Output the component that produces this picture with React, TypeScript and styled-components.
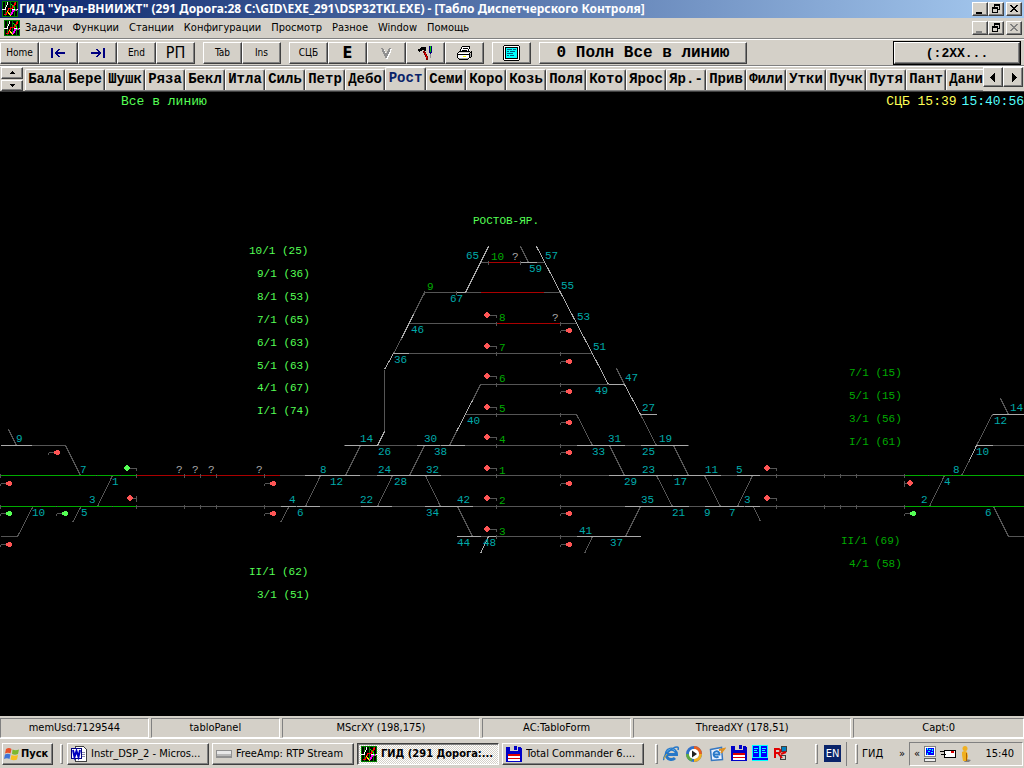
import React from "react";
import styled, { createGlobalStyle, css } from "styled-components";

const FACE = "#d4d0c8";
const UI = `"DejaVu Sans Condensed", "DejaVu Sans", sans-serif`;
const MONO = `"Liberation Mono", monospace`;

const GlobalStyle = createGlobalStyle`
  * { box-sizing: border-box; }
  body { margin: 0; background: ${FACE}; overflow-x: hidden; }
  button { font: inherit; color: inherit; margin: 0; padding: 0; white-space: nowrap; }
`;

const raised = css`
  background: ${FACE};
  border: 1px solid;
  border-color: #fff #404040 #404040 #fff;
  box-shadow: inset -1px -1px #808080;
`;

const Screen = styled.div`
  display: flex;
  flex-direction: column;
  min-height: 100vh;
  background: ${FACE};
  font-family: ${UI};
  font-size: 11px;
  color: #000;
`;

const TitleBar = styled.header`
  display: flex;
  align-items: center;
  gap: 1px;
  height: 18px;
  padding: 0 2px;
  background: linear-gradient(90deg, #0a246a, #a6caf0);
  color: #fff;
`;

const TitleText = styled.h1`
  flex: 1;
  margin: 0;
  font-family: "Noto Sans", sans-serif;
  font-size: 12px;
  font-weight: 700;
  line-height: 18px;
  white-space: nowrap;
  overflow: hidden;
`;

const MenuBar = styled.div`
  display: flex;
  align-items: center;
  height: 20px;
  padding: 0 2px 0 4px;
`;

const Menus = styled.nav`
  display: flex;
  flex: 1;
  gap: 10px;
  padding-left: 5px;
`;

const MenuItem = styled.button`
  border: 0;
  background: none;
  line-height: 16px;
`;

const WindowButtons = styled.div`
  display: flex;
`;

const WindowButton = styled.button<{ $apart?: boolean }>`
  ${raised}
  display: grid;
  place-items: center;
  width: 16px;
  height: 14px;
  color: #000;
  margin-left: ${(p) => (p.$apart ? 2 : 0)}px;
  &:disabled { color: #808080; }
`;

const Toolbar = styled.div`
  display: flex;
  align-items: center;
  height: 28px;
  border-top: 1px solid #808080;
  border-bottom: 1px solid #808080;
  box-shadow: inset 0 1px #fff;
  padding: 2px 4px 0 0;
`;

const ToolGroup = styled.div`
  display: flex;
  margin-right: 8px;
`;

const ToolButton = styled.button<{ $wide?: boolean }>`
  ${raised}
  display: grid;
  place-items: center;
  width: ${(p) => (p.$wide ? 208 : 39)}px;
  height: 22px;
  font-family: ${(p) => (p.$wide ? MONO : UI)};
  font-size: ${(p) => (p.$wide ? 16 : 10)}px;
  font-weight: ${(p) => (p.$wide ? 700 : 400)};
  line-height: 18px;
`;

const BigLabel = styled.span<{ $bold?: boolean }>`
  font-size: 16px;
  font-weight: ${(p) => (p.$bold ? 700 : 400)};
  line-height: 18px;
`;

const DefaultButton = styled.button`
  ${raised}
  outline: 1px solid #000;
  width: 126px;
  height: 22px;
  margin-left: auto;
  font-family: ${MONO};
  font-size: 13px;
  font-weight: 700;
`;

const TabStrip = styled.div`
  display: flex;
  height: 26px;
  border-top: 1px solid #fff;
  border-bottom: 1px solid #404040;
`;

const Spinner = styled.div`
  display: flex;
  flex-direction: column;
  gap: 1px;
  width: 22px;
  margin: 0 2px 0 1px;
`;

const SpinButton = styled.button`
  ${raised}
  flex: 1;
  display: grid;
  place-items: center;
`;

const Tabs = styled.div`
  display: flex;
  flex: 1;
  min-width: 0;
  overflow: hidden;
  align-items: flex-end;
  border-bottom: 1px solid #808080;
`;

const Tab = styled.button<{ $on?: boolean }>`
  flex: 0 0 ${(p) => (p.$on ? 41 : 40)}px;
  height: ${(p) => (p.$on ? 23 : 21)}px;
  padding-bottom: ${(p) => (p.$on ? 3 : 2)}px;
  overflow: hidden;
  background: ${FACE};
  border: 0 solid;
  border-width: 1px 1px 0 1px;
  border-color: #fff #404040 #404040 #fff;
  border-radius: 2px 2px 0 0;
  box-shadow: inset -1px 0 #808080;
  font-family: ${MONO};
  font-size: 14px;
  font-weight: 700;
  line-height: 16px;
  color: ${(p) => (p.$on ? "#0a246a" : "#000")};
`;

const Scroller = styled.div`
  display: flex;
  padding-right: 1px;
`;

const ScrollButton = styled.button`
  ${raised}
  display: grid;
  place-items: center;
  width: 20px;
  height: 20px;
`;

const Board = styled.main`
  flex: 1;
  background: #000;
  font-family: ${MONO};
`;

const BoardHeader = styled.div`
  display: flex;
  gap: 5px;
  height: 18px;
  padding-left: 121px;
  font-size: 13px;
  line-height: 20px;
  color: #5f5;
  white-space: nowrap;
`;

const Mode = styled.span`
  flex: 1;
`;

const Stamp = styled.span<{ $live?: boolean }>`
  color: ${(p) => (p.$live ? "#5ff" : "#ff5")};
`;

const Scheme = styled.svg`
  display: block;
  width: 100%;
  height: auto;
`;

const SchemeText = styled.text`
  font-family: ${MONO};
  font-size: 11px;
  white-space: pre;
`;

const StatusBar = styled.footer`
  display: grid;
  grid-template-columns: 150fr 130fr 200fr 150fr 220fr 172fr;
  gap: 2px;
  height: 22px;
  padding-top: 2px;
`;

const StatusCell = styled.div`
  border: 1px solid;
  border-color: #808080 #fff #fff #808080;
  line-height: 18px;
  text-align: center;
  white-space: nowrap;
  overflow: hidden;
`;

const Taskbar = styled.div`
  display: flex;
  align-items: center;
  height: 30px;
  padding: 0 1px 0 2px;
  border-top: 1px solid #fff;
`;

const StartButton = styled.button`
  ${raised}
  display: flex;
  align-items: center;
  gap: 1px;
  width: 51px;
  height: 22px;
  padding-left: 1px;
  font-weight: 700;
`;

const Grip = styled.span<{ $gap?: number }>`
  width: 3px;
  height: 20px;
  margin: 0 4px 0 ${(p) => p.$gap ?? 8}px;
  background: ${FACE};
  border: 1px solid;
  border-color: #fff #808080 #808080 #fff;
`;

const Tasks = styled.div`
  display: flex;
  flex: 1;
  gap: 3px;
  min-width: 0;
`;

const Task = styled.button<{ $on?: boolean }>`
  ${raised}
  display: flex;
  align-items: center;
  gap: 4px;
  width: 142px;
  height: 22px;
  padding: 0 3px;
  ${(p) =>
    p.$on &&
    css`
      border-color: #404040 #fff #fff #404040;
      box-shadow: inset 1px 1px #808080;
      background: repeating-conic-gradient(#fff 0 25%, ${FACE} 0 50%) 0 0 / 2px 2px;
      font-weight: 700;
    `}
`;

const TaskName = styled.span`
  flex: 1;
  min-width: 0;
  overflow: hidden;
  text-align: left;
`;

const QuickLaunch = styled.div`
  display: flex;
  gap: 5px;
  padding-right: 26px;
`;

const IconButton = styled.button`
  display: block;
  border: 0;
  background: none;
  height: 18px;
`;

const Language = styled.button`
  width: 17px;
  height: 17px;
  margin-left: 2px;
  border: 0;
  background: #0a246a;
  color: #fff;
`;

const Divider = styled.span`
  width: 1px;
  height: 24px;
  margin-left: 5px;
  background: #808080;
`;

const DeskBand = styled.div`
  display: flex;
  width: 43px;
  justify-content: space-between;
`;

const Tray = styled.div`
  display: flex;
  align-items: center;
  gap: 3px;
  width: 114px;
  height: 24px;
  margin-left: 4px;
  padding: 0 8px 0 4px;
  border: 1px solid;
  border-color: #808080 #fff #fff #808080;
`;

const Clock = styled.time`
  margin-left: auto;
`;

const Pix = ({ w = 16, h = 16, children }: { w?: number; h?: number; children: React.ReactNode }) => (
  <svg width={w} height={h} viewBox={`0 0 ${w} ${h}`} shapeRendering="crispEdges" fill="none" aria-hidden="true">
    {children}
  </svg>
);

const GidIcon = () => (
  <Pix>
    <path fill="#000" d="M0 0h16v16H0z" />
    <path stroke="#008000" d="M3.5 0v16M8.5 0v16M12.5 0v16M0 .5h16M0 15.5h16M15.5 0v16M.5 0v16" />
    <path stroke="#fff" d="M0 8.5h3l3-7M10 8.5h6" />
    <path stroke="#f00" strokeWidth="1.5" d="M2 13.5h2l3-6h3l4-6" />
    <path stroke="#ff0" d="M5 10l4 5" />
    <path stroke="#f0f" strokeWidth="1.5" d="M9 14l2-4 4-1" />
    <path stroke="#0f0" d="M9 3l3 3 2 4" />
  </Pix>
);

const Floppy = () => (
  <Pix>
    <path fill="#0000c8" d="M0 1h14l2 2v13H0z" />
    <path fill="#d4d0c8" d="M4 0h8v5H4z" />
    <path fill="#0000c8" d="M8 0h3v4H8z" />
    <path fill="#fff" d="M2 8h12v7H2z" />
    <path fill="#e00000" d="M2 8h12v2H2zM2 12h12v1H2z" />
  </Pix>
);

const MinGlyph = () => <Pix w={10} h={10}><path fill="currentColor" d="M1 8h6v2H1z" /></Pix>;
const RestoreGlyph = () => (
  <Pix w={10} h={10}>
    <path fill="currentColor" d="M3 0h6v2H3zM3 2h1v1H3zM8 2h1v4H7V5h1zM1 3h6v2H1zM1 5h1v4H1zM6 5h1v4H6zM1 8h6v1H1z" />
  </Pix>
);
const CloseGlyph = () => (
  <Pix w={10} h={10}>
    <path fill="currentColor" d="M1 1h2v1h1v1h2V2h1V1h2v1H8v1H7v1H6v1h1v1h1v1h1v1H7V7H6V6H4v1H3v1H1V7h1V6h1V5h1V4H3V3H2V2H1z" />
  </Pix>
);

const ArrowLeft = () => (
  <Pix w={15} h={12}>
    <path fill="#000080" d="M0 1h2v10H0zM4 5h10v2H4zM5 4h2v1H5zM6 3h2v1H6zM7 2h2v1H7zM5 7h2v1H5zM6 8h2v1H6zM7 9h2v1H7z" />
  </Pix>
);
const ArrowRight = () => (
  <Pix w={15} h={12}>
    <path fill="#000080" d="M13 1h2v10h-2zM1 5h10v2H1zM8 4h2v1H8zM7 3h2v1H7zM6 2h2v1H6zM8 7h2v1H8zM7 8h2v1H7zM6 9h2v1H6z" />
  </Pix>
);
const Tools = () => (
  <Pix w={17} h={18}>
    <path fill="#000" d="M4 3h4v1h1v3H8v1H7V6H5v1H3v1H2V7H1V5h2V4h1zM8 3h1v1H8z" />
    <path fill="#800000" d="M6 7h2v2H6zM7 8h2v3H7zM8 10h2v3H8zM9 12h2v4H9z" />
    <path fill="#f00" d="M8 9h1v2H8zM9 12h1v2H9z" />
    <path fill="#000080" d="M12 2h3v7h-1v1h-1V9h-1z" />
    <path fill="#0c0" d="M13 2h1v6h-1z" />
    <path fill="#909090" d="M13 10h1v4h-1z" />
  </Pix>
);
const Printer = () => (
  <Pix w={17} h={18}>
    <path fill="#fff" d="M6 2h8v6H4z" />
    <path fill="#fff" d="M2 9h12v6H2z" />
    <path
      fill="#000"
      d="M6 2h8v1H6zM5 3h1v2H5zM13 3h1v2h-1zM4 5h1v2H4zM12 5h1v2h-1zM7 4h5v1H7zM6 6h5v1H6zM3 7h11v1H3zM2 8h1v1H2zM1 9h1v5H1zM2 10h11v1H2zM13 9h1v1h-1zM14 8h1v1h-1zM15 7h1v6h-1zM13 10h1v4h-1zM14 13h1v1h-1zM2 14h1v1H2zM3 15h9v1H3zM12 14h1v1h-1z"
    />
    <path fill="#a0a0a0" d="M14 10h1v3h-1zM3 14h9v1H3z" />
    <path fill="#ff0" d="M7 12h3v1H7z" />
  </Pix>
);
const ListIcon = () => (
  <Pix w={17} h={18}>
    <path fill="#000" d="M1 1h15v1H1zM1 16h15v1H1zM0 2h1v14H0zM16 2h1v14h-1z" />
    <path fill="#fff" d="M1 2h15v14H1z" />
    <path fill="#000" d="M2 3h13v12H2z" />
    <path fill="#0ff" d="M3 4h11v10H3z" />
    <path fill="#006080" d="M4 5h5v1H4zM10 5h3v1h-3zM4 7h2v1H4zM7 7h5v1H7zM4 9h6v1H4zM4 11h2v1H4zM7 11h4v1H7z" />
  </Pix>
);
const GreyV = () => (
  <Pix w={13} h={12}>
    <path stroke="#fff" strokeWidth="2" d="M3 2l4 9 4-9" />
    <path stroke="#909090" strokeWidth="2" d="M2 1l4 9 4-9" />
  </Pix>
);
const Triangle = ({ dir }: { dir: "up" | "down" | "left" | "right" }) => {
  const d = {
    up: "M4 2h1v1h1v1h1v1H2V4h1V3h1z",
    down: "M2 2h5v1H6v1H5v1H4V4H3V3H2z",
    left: "M6 0v9H5V8H4V7H3V6H2V5H1V4h1V3h1V2h1V1h1V0z",
    right: "M3 0v9h1V8h1V7h1V6h1V5h1V4H7V3H6V2H5V1H4V0z",
  }[dir];
  const h = dir === "up" || dir === "down" ? 7 : 9;
  return <Pix w={9} h={h}><path fill="#000" d={d} /></Pix>;
};

const Flag = () => (
  <svg width="16" height="16" viewBox="0 0 16 16" aria-hidden="true">
    <path fill="#e8502a" d="M2 3q3-2 5.500 0L6.500 7.500Q4 6 1 7.500z" />
    <path fill="#7cb82f" d="M8.500 3.500q3 1.500 6.500 0L14 8q-3 1.500-6 0z" />
    <path fill="#3f74d8" d="M1 8.500q3-1.500 5.500 0L5.500 13Q3 11.500 0 13z" />
    <path fill="#f8c020" d="M7.500 9q3 1.500 6.500 0l-1 4.500q-3 1.500-6.500 0z" />
  </svg>
);
const WordIcon = () => (
  <Pix>
    <path fill="#fff" stroke="#404040" d="M4.500.500h8l3 3v12h-11z" />
    <path stroke="#88a" d="M10 6.500h4M10 8.500h4M10 10.500h4" />
    <path fill="#fff" stroke="#000080" d="M.500 2.500h10v10H.500z" />
    <path stroke="#0000c0" strokeWidth="2" shapeRendering="auto" d="M2 4l1.500 7L5.500 5l2 6L9 4" />
  </Pix>
);
const AmpIcon = () => (
  <Pix>
    <path fill="#909090" d="M0 4h16v8H0z" />
    <path fill="#e8e8e8" d="M1 5h14v3H1z" />
    <path fill="#b8b8b8" d="M1 8h14v2H1z" />
  </Pix>
);
const IeIcon = () => (
  <svg width="18" height="18" viewBox="0 0 18 18" fill="none" aria-hidden="true">
    <path stroke="#2878c8" strokeWidth="3" d="M4 9.500h10.500a5.200 5.200 0 1 0-1.500 3.500" />
    <path stroke="#58b0f0" strokeWidth="1" d="M5 7a4.500 4.500 0 0 1 8-1" />
    <path stroke="#2878c8" strokeWidth="1.500" d="M2 15C0 12 10 2 15 2q2 0 1 3" />
    <path stroke="#e0b030" strokeWidth="1" d="M2 14q1-3 3-5" />
  </svg>
);
const WmpIcon = () => (
  <svg width="18" height="18" viewBox="0 0 18 18" fill="none" aria-hidden="true">
    <circle cx="9" cy="9" r="6.500" stroke="#3070c8" strokeWidth="3" />
    <path stroke="#e86020" strokeWidth="3" d="M9 2.500A6.500 6.500 0 0 1 15.500 9" />
    <path stroke="#60a840" strokeWidth="3" d="M2.500 9A6.500 6.500 0 0 0 7 15" />
    <path stroke="#f0b020" strokeWidth="3" d="M15.500 9A6.500 6.500 0 0 1 9 15.500" />
    <circle cx="9" cy="9" r="5" fill="#fff" />
    <path fill="#202020" d="M7 5.500l5 3.500-5 3.500z" />
  </svg>
);
const MailIcon = () => (
  <svg width="18" height="18" viewBox="0 0 18 18" fill="none" aria-hidden="true">
    <path fill="#e8f0ff" stroke="#3878c0" strokeWidth="1.500" d="M2.500 4.500l11-2 1 12-11 1z" />
    <path stroke="#2878c8" strokeWidth="1.800" d="M6 9.500h5.500a3 3 0 1 0-1 2" />
    <path stroke="#e09020" strokeWidth="2" d="M11 5l5-1-3 4" />
  </svg>
);
const CommanderIcon = () => (
  <Pix>
    <path fill="#0ff" d="M0 0h16v16H0z" />
    <path fill="#00f" d="M1 1h6v11H1zM9 1h6v11H9zM0 13h16v2H0z" />
    <path fill="#0ff" d="M2 3h4v1H2zM2 5h3v1H2zM2 7h4v1H2zM10 3h4v1h-4zM10 5h3v1h-3zM10 7h4v1h-4z" />
  </Pix>
);
const RemoteIcon = () => (
  <Pix>
    <path fill="#d4d0c8" stroke="#404040" d="M8.500 1.500h5v5h-5zM7.500 10.500h5v4h-5z" />
    <path fill="#0080c0" d="M9 2h4v4H9z" />
    <path stroke="#e00000" strokeWidth="2" shapeRendering="auto" d="M2 13V4h4q3 2 0 4H3M5 8l4 5M8 9l5-2" />
  </Pix>
);
const MonitorIcon = () => (
  <Pix w={14}>
    <path fill="#fff" stroke="#808080" d="M1.500.500h11v10h-11z" />
    <path fill="#00f" d="M3 2h8v7H3z" />
    <path fill="#0ff" d="M4 2h1v2H4zM6 3h2v1H6zM9 3h1v2H9zM5 5h2v1H5zM8 6h2v1H8zM4 7h1v2H4z" />
    <path fill="#f0f0f0" stroke="#606060" d="M1.500 12.500h11v3h-11z" />
  </Pix>
);
const CardIcon = () => (
  <Pix w={17}>
    <path fill="#fff" stroke="#000" d="M4.500 4.500h11v7h-11z" />
    <path stroke="#000" d="M0 5.500h5M1 8.500h5" />
    <path fill="#e00000" d="M11 5h3v2h-3z" />
  </Pix>
);
const ManIcon = () => (
  <svg width="12" height="16" viewBox="0 0 12 16" aria-hidden="true">
    <path fill="#808080" d="M6 13l5 1-2 2H4z" />
    <circle cx="5" cy="2.500" r="2.500" fill="#f0b020" />
    <path fill="#f0b020" d="M2 6q3-2 5 0l1 4-1 5H3L2 9z" />
    <path fill="#b06000" d="M6 7h1v8H6z" />
  </svg>
);

const DIM = "#555";
const LIT = "#aaa";
const RED = "#a00";
const GREEN = "#0a0";

/* Track sections: colour and path, in board coordinates. */
const tracks: [string, string][] = [
  [DIM, `M480 262H544M520 246L528 262M424 292H560M424 292L413 314M401 338L393 353M384 369V431
    M408 323H576M393 353H592M480 384H608M480 384L472 400M456 431L449 445M464 414H576L592 445
    M344 445H688M0 445H65L80 475M8 429L16 445M0 475H1024M0 506H1024M456 536H640
    M345 475L360 445M409 475L424 445M377 506L392 475M425 475L440 506M457 506L472 536
    M592 536L584 553M625 536L640 506M609 445L624 475M656 475L672 506M673 445L688 475
    M640 414L656 445M616 368L624 384M112 475L97 506M80 507L72 522M32 507L17 536H0
    M320 475L305 506M288 507L280 522M704 475L720 506M752 475L737 506M753 506L760 521
    M929 506L944 475M961 475L969 460M976 445L992 414M976 445H1024M1000 398L1008 414M993 506L1008 536H1024`],
  [LIT, `M488 246L465 292M456 292H465M520 262H536M536 246L608 384M413 314L401 338M393 353L384 369
    M393 353H408M384 431L377 445M472 400L456 431M608 384H624L640 414H656M0 445H32
    M344 445H377M416 445H464M576 445H624M640 445H688M304 475H360M376 475H440M608 475H720M736 475H760
    M280 506H320M360 506H392M424 506H472M624 506H688M704 506H760M456 536H480M488 536H496M576 536H640
    M488 536L480 553M969 460L976 445H992M992 414H1024`],
  [RED, "M488 262H520M480 292H544M496 323H560M136 475H280"],
  [GREEN, "M0 475H136M0 506H136M904 475H1024M904 506H1024"],
];

/* Section joints on every track, as [y, [x...]]. */
const joints: [number, number[]][] = [
  [262, [488, 520]],
  [292, [424, 456]],
  ...[323, 353, 384, 414, 445, 536].map((y): [number, number[]] => [y, [496, 560]]),
  [475, [0, 136, 184, 200, 216, 264, 496, 560, 776, 824, 840, 856, 904]],
  [506, [0, 136, 184, 200, 216, 264, 496, 560, 776, 824, 840, 856, 904]],
];
const smallJoints: [number, number[]][] = [
  [292, [480, 544]],
  [445, [32, 48, 344, 392, 440, 688]],
  [475, [96, 120, 280, 304, 360, 672, 736, 760, 928, 952]],
  [506, [40, 56, 112, 280, 296, 320, 392, 744, 760, 920]],
];
const jointPath = (rows: [number, number[]][], up: number, len: number) =>
  rows.map(([y, xs]) => xs.map((x) => `M${x} ${y - up}v${len}`).join("")).join("");

/* A signal lamp at (x, y) on a bracket whose post stands at x = post. */
type Signal = { x: number; y: number; post: number; go?: boolean; tall?: boolean };
const signals: Signal[] = [
  ...[315, 346, 376, 407, 437, 468, 498, 529].map((y): Signal => ({ x: 487, y, post: 496 })),
  ...[330, 361, 391, 422, 452, 483, 513, 544].map((y): Signal => ({ x: 569, y, post: 560 })),
  { x: 57, y: 452, post: 48 },
  { x: 9, y: 483, post: 0 },
  { x: 9, y: 513, post: 0, go: true },
  { x: 65, y: 513, post: 56, go: true },
  { x: 9, y: 544, post: 0 },
  { x: 127, y: 468, post: 136, go: true },
  { x: 130, y: 498, post: 136, tall: true },
  { x: 273, y: 483, post: 264 },
  { x: 273, y: 513, post: 264 },
  { x: 767, y: 468, post: 776 },
  { x: 767, y: 498, post: 776 },
  { x: 910, y: 483, post: 904, tall: true },
  { x: 913, y: 513, post: 904, go: true },
];

const points: [string, number, number][] = [
  ["65", 466, 259], ["57", 545, 259], ["59", 529, 272], ["55", 561, 289], ["67", 450, 302],
  ["53", 577, 320], ["46", 411, 333], ["51", 593, 350], ["36", 394, 363], ["47", 625, 381],
  ["49", 595, 394], ["27", 642, 411], ["40", 467, 424], ["14", 360, 442], ["30", 424, 442],
  ["26", 378, 455], ["38", 434, 455], ["31", 608, 442], ["33", 592, 455], ["19", 659, 442],
  ["25", 642, 455], ["24", 378, 473], ["32", 426, 473], ["12", 330, 485], ["28", 394, 485],
  ["23", 642, 473], ["29", 624, 485], ["17", 674, 485], ["22", 360, 503], ["42", 457, 503],
  ["34", 426, 516], ["35", 641, 503], ["21", 672, 516], ["41", 579, 534], ["44", 457, 546],
  ["48", 483, 546], ["37", 610, 546], ["9", 16, 442], ["7", 80, 473], ["1", 112, 485],
  ["3", 89, 503], ["10", 32, 516], ["5", 81, 516], ["8", 320, 473], ["4", 289, 503],
  ["6", 297, 516], ["11", 705, 473], ["5", 736, 473], ["3", 744, 503], ["9", 704, 516],
  ["7", 729, 516], ["2", 921, 503], ["4", 944, 485], ["6", 985, 516], ["8", 953, 473],
  ["10", 976, 455], ["12", 994, 424], ["14", 1010, 411],
];
const trackNames: [string, number, number][] = [
  ["10", 491, 260], ["9", 427, 290], ["8", 499, 321], ["7", 499, 351], ["6", 499, 382],
  ["5", 499, 412], ["4", 499, 443], ["1", 499, 474], ["2", 499, 504], ["3", 499, 535],
];
const unknowns: [string, number, number][] = [
  ["?", 512, 260], ["?", 552, 321], ["?", 176, 473], ["?", 192, 473], ["?", 208, 473], ["?", 256, 473],
];
const departures: [string, number, number][] = [
  ["РОСТОВ-ЯР.", 473, 224],
  ["10/1 (25)", 249, 254], ["9/1 (36)", 257, 277], ["8/1 (53)", 257, 300], ["7/1 (65)", 257, 323],
  ["6/1 (63)", 257, 346], ["5/1 (63)", 257, 369], ["4/1 (67)", 257, 391], ["I/1 (74)", 257, 414],
  ["II/1 (62)", 249, 575], ["3/1 (51)", 257, 598],
];
const arrivals: [string, number, number][] = [
  ["7/1 (15)", 849, 376], ["5/1 (15)", 849, 399], ["3/1 (56)", 849, 422], ["I/1 (61)", 849, 445],
  ["II/1 (69)", 841, 544], ["4/1 (58)", 849, 567],
];

const Labels = ({ items, fill }: { items: [string, number, number][]; fill: string }) => (
  <g fill={fill}>
    {items.map(([text, x, y]) => (
      <SchemeText key={`${x}-${y}`} x={x} y={y}>{text}</SchemeText>
    ))}
  </g>
);

const LAMP_RIGHT = "M2 0h2v1h1v1h1v2H5v1H4v1H2V5H1V4H0V2h1V1h1z";
const LAMP_LEFT = "M2 0h3v1h1v3H5v1H2V4H0V1h2z";

const SignalMark = ({ x, y, post, go, tall }: Signal) => {
  const round = post > x || tall;
  return (
    <g>
      <path
        stroke={DIM}
        transform="translate(.5 .5)"
        d={`M${post} ${tall ? y - 3 : y}V${tall ? y + 3 : y + 2}M${post} ${y}H${x}`}
      />
      <path
        fill={go ? "#5f5" : "#f55"}
        transform={`translate(${x - 3} ${round ? y - 3 : y - 2})`}
        d={round ? LAMP_RIGHT : LAMP_LEFT}
      />
    </g>
  );
};

const menus = ["Задачи", "Функции", "Станции", "Конфигурации", "Просмотр", "Разное", "Window", "Помощь"];
const stations = [
  "Бала", "Бере", "Шушк", "Ряза", "Бекл", "Итла", "Силь", "Петр", "Дебо", "Рост", "Семи", "Коро",
  "Козь", "Поля", "Кото", "Ярос", "Яр.-", "Прив", "Фили", "Утки", "Пучк", "Путя", "Пант", "Дани",
];
const status = ["memUsd:7129544", "tabloPanel", "MScrXY (198,175)", "AC:TabloForm", "ThreadXY (178,51)", "Capt:0"];

const WindowControls = ({ child }: { child?: boolean }) => (
  <WindowButtons>
    <WindowButton aria-label="Свернуть" disabled={child}><MinGlyph /></WindowButton>
    <WindowButton aria-label="Восстановить"><RestoreGlyph /></WindowButton>
    <WindowButton aria-label="Закрыть" $apart disabled={child}><CloseGlyph /></WindowButton>
  </WindowButtons>
);

export default function App() {
  return (
    <Screen>
      <GlobalStyle />
      <TitleBar>
        <GidIcon />
        <TitleText>ГИД "Урал-ВНИИЖТ" (291 Дорога:28 C:\GID\EXE_291\DSP32TKI.EXE) - [Табло Диспетчерского Контроля]</TitleText>
        <WindowControls />
      </TitleBar>
      <MenuBar>
        <GidIcon />
        <Menus>
          {menus.map((m) => <MenuItem key={m}>{m}</MenuItem>)}
        </Menus>
        <WindowControls child />
      </MenuBar>
      <Toolbar>
        <ToolGroup>
          <ToolButton>Home</ToolButton>
          <ToolButton aria-label="Назад"><ArrowLeft /></ToolButton>
          <ToolButton aria-label="Вперёд"><ArrowRight /></ToolButton>
          <ToolButton>End</ToolButton>
          <ToolButton><BigLabel>РП</BigLabel></ToolButton>
        </ToolGroup>
        <ToolGroup>
          <ToolButton>Tab</ToolButton>
          <ToolButton>Ins</ToolButton>
        </ToolGroup>
        <ToolGroup>
          <ToolButton>СЦБ</ToolButton>
          <ToolButton><BigLabel $bold>E</BigLabel></ToolButton>
          <ToolButton aria-label="Проверка"><GreyV /></ToolButton>
          <ToolButton aria-label="Настройка"><Tools /></ToolButton>
          <ToolButton aria-label="Печать"><Printer /></ToolButton>
        </ToolGroup>
        <ToolGroup>
          <ToolButton aria-label="Список"><ListIcon /></ToolButton>
        </ToolGroup>
        <ToolButton $wide>0 Полн Все в линию</ToolButton>
        <DefaultButton>(:2XX...</DefaultButton>
      </Toolbar>
      <TabStrip>
        <Spinner>
          <SpinButton aria-label="Вверх"><Triangle dir="up" /></SpinButton>
          <SpinButton aria-label="Вниз"><Triangle dir="down" /></SpinButton>
        </Spinner>
        <Tabs role="tablist">
          {stations.map((s) => (
            <Tab key={s} role="tab" aria-selected={s === "Рост"} $on={s === "Рост"}>{s}</Tab>
          ))}
        </Tabs>
        <Scroller>
          <ScrollButton aria-label="Влево"><Triangle dir="left" /></ScrollButton>
          <ScrollButton aria-label="Вправо"><Triangle dir="right" /></ScrollButton>
        </Scroller>
      </TabStrip>
      <Board>
        <BoardHeader>
          <Mode>Все в линию</Mode>
          <Stamp>СЦБ 15:39</Stamp>
          <Stamp $live>15:40:56</Stamp>
        </BoardHeader>
        <Scheme viewBox="0 110 1024 606" role="img" aria-label="Ростов-Яр.">
          <g transform="translate(.5 .5)" fill="none" shapeRendering="crispEdges">
            {tracks.map(([stroke, d]) => <path key={stroke} stroke={stroke} d={d} />)}
            <path stroke={DIM} d={jointPath(joints, 2, 4)} />
            <path stroke={DIM} d={jointPath(smallJoints, 1, 1)} />
          </g>
          <g shapeRendering="crispEdges">
            {signals.map((s) => <SignalMark key={`${s.x}-${s.y}`} {...s} />)}
          </g>
          <Labels items={points} fill="#0aa" />
          <Labels items={trackNames} fill="#0a0" />
          <Labels items={unknowns} fill="#aaa" />
          <Labels items={departures} fill="#5f5" />
          <Labels items={arrivals} fill="#0a0" />
        </Scheme>
      </Board>
      <StatusBar>
        {status.map((s) => <StatusCell key={s}>{s}</StatusCell>)}
      </StatusBar>
      <Taskbar>
        <StartButton><Flag />Пуск</StartButton>
        <Grip $gap={7} />
        <Tasks>
          <Task><WordIcon /><TaskName>Instr_DSP_2 - Micros...</TaskName></Task>
          <Task><AmpIcon /><TaskName>FreeAmp: RTP Stream</TaskName></Task>
          <Task $on><GidIcon /><TaskName>ГИД (291 Дорога:...</TaskName></Task>
          <Task><Floppy /><TaskName>Total Commander 6....</TaskName></Task>
        </Tasks>
        <Grip />
        <QuickLaunch>
          <IconButton aria-label="Internet Explorer"><IeIcon /></IconButton>
          <IconButton aria-label="Media Player"><WmpIcon /></IconButton>
          <IconButton aria-label="Outlook Express"><MailIcon /></IconButton>
          <IconButton aria-label="Total Commander"><Floppy /></IconButton>
          <IconButton aria-label="Commander"><CommanderIcon /></IconButton>
          <IconButton aria-label="Remote"><RemoteIcon /></IconButton>
        </QuickLaunch>
        <Grip $gap={0} />
        <Language>EN</Language>
        <Divider />
        <Grip />
        <DeskBand><span>ГИД</span><span>»</span></DeskBand>
        <Tray>
          <span>«</span>
          <MonitorIcon />
          <CardIcon />
          <ManIcon />
          <Clock>15:40</Clock>
        </Tray>
      </Taskbar>
    </Screen>
  );
}
